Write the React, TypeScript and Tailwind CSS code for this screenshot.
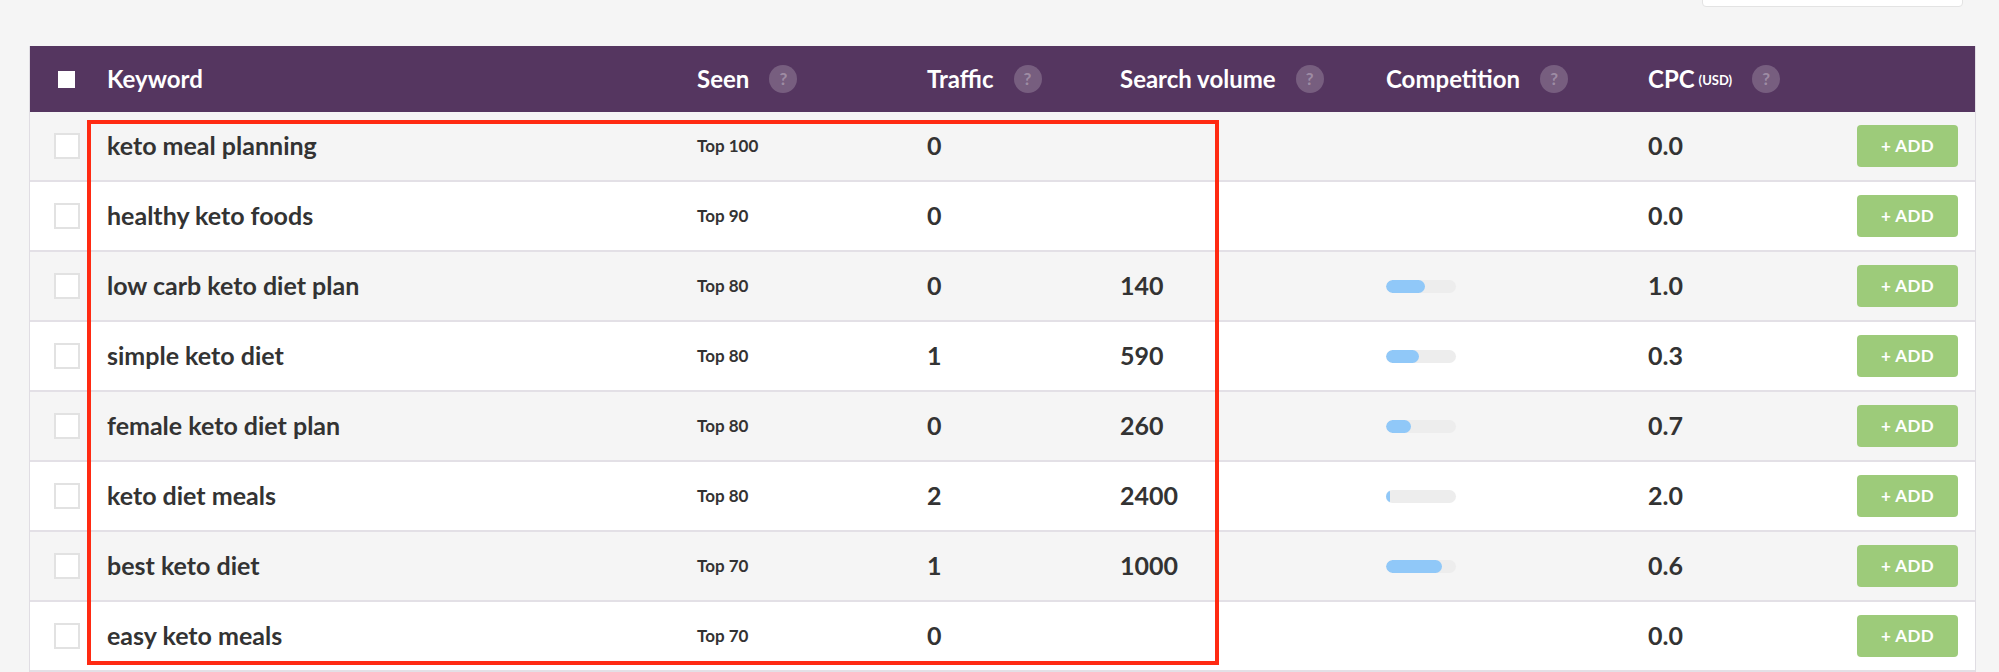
import React from 'react';

interface Row {
  keyword: string;
  seen: string;
  traffic: string;
  volume?: string;
  competition?: number;
  cpc: string;
}

const rows: Row[] = [
  { keyword: 'keto meal planning', seen: 'Top 100', traffic: '0', cpc: '0.0' },
  { keyword: 'healthy keto foods', seen: 'Top 90', traffic: '0', cpc: '0.0' },
  { keyword: 'low carb keto diet plan', seen: 'Top 80', traffic: '0', volume: '140', competition: 55, cpc: '1.0' },
  { keyword: 'simple keto diet', seen: 'Top 80', traffic: '1', volume: '590', competition: 47, cpc: '0.3' },
  { keyword: 'female keto diet plan', seen: 'Top 80', traffic: '0', volume: '260', competition: 35, cpc: '0.7' },
  { keyword: 'keto diet meals', seen: 'Top 80', traffic: '2', volume: '2400', competition: 6, cpc: '2.0' },
  { keyword: 'best keto diet', seen: 'Top 70', traffic: '1', volume: '1000', competition: 80, cpc: '0.6' },
  { keyword: 'easy keto meals', seen: 'Top 70', traffic: '0', cpc: '0.0' },
];

const Help = () => (
  <span className="ml-5 inline-flex h-[28px] w-[28px] items-center justify-center rounded-full bg-white/20 text-[17px] font-bold text-white/30">
    ?
  </span>
);

const App: React.FC = () => {
  return (
    <div className="relative h-[672px] w-[1999px] overflow-hidden bg-[#f5f5f5]" style={{ fontFamily: 'Lato, "Open Sans", sans-serif' }}>
      <div className="absolute left-[1702px] top-[-4px] h-[11px] w-[261px] rounded border border-[#e3e3e3] bg-white" />

      <div className="ml-[29px] mt-[46px] w-[1947px] border-x border-[#e0dde3]">
        <div className="flex h-[66px] items-center bg-[#553660] text-[24px] font-bold text-white">
          <div className="w-[77px] pl-[28px]">
            <div className="h-[17px] w-[17px] bg-white" />
          </div>
          <div className="w-[590px]">Keyword</div>
          <div className="flex w-[230px] items-center">Seen<Help /></div>
          <div className="flex w-[193px] items-center">Traffic<Help /></div>
          <div className="flex w-[266px] items-center">Search volume<Help /></div>
          <div className="flex w-[262px] items-center">Competition<Help /></div>
          <div className="flex w-[209px] items-center">
            CPC<span className="ml-1 mt-1 text-[13px]">(USD)</span><Help />
          </div>
        </div>

        {rows.map((r, i) => (
          <div
            key={r.keyword}
            className={`flex h-[70px] items-center border-b-2 border-[#e3e0e6] text-[#333] ${i % 2 === 0 ? 'bg-[#f5f5f5]' : 'bg-white'}`}
          >
            <div className="w-[77px] pl-[24px]">
              <div className="h-[26px] w-[26px] border-2 border-[#e2e2e2] bg-white" />
            </div>
            <div className="w-[590px] text-[25px] font-bold">{r.keyword}</div>
            <div className="w-[230px] text-[17px] font-bold">{r.seen}</div>
            <div className="w-[193px] text-[25px] font-bold">{r.traffic}</div>
            <div className="w-[266px] text-[25px] font-bold">{r.volume}</div>
            <div className="w-[262px]">
              {r.competition !== undefined && (
                <div className="h-[13px] w-[70px] overflow-hidden rounded-full bg-[#ededed]">
                  <div className="h-full rounded-full bg-[#90c8f8]" style={{ width: `${r.competition}%` }} />
                </div>
              )}
            </div>
            <div className="w-[209px] text-[25px] font-bold">{r.cpc}</div>
            <div className="flex-1">
              <button className="h-[42px] w-[101px] rounded bg-[#9dcb7a] text-[17px] font-bold tracking-wide text-white">
                + ADD
              </button>
            </div>
          </div>
        ))}
      </div>

      <div className="pointer-events-none absolute left-[87px] top-[120px] h-[545px] w-[1132px] border-4 border-[#ff2a12]" />
    </div>
  );
};

export default App;
